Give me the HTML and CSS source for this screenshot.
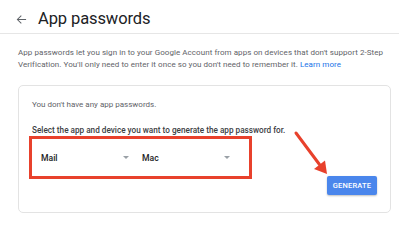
FILE: index.html
```html
<!DOCTYPE html>
<html>
<head>
<meta charset="utf-8">
<link rel="stylesheet" href="styles.css">
</head>
<body>
<header class="topbar">
  <svg class="back" width="11" height="11" viewBox="0 0 12 12"><path d="M11 6H1.5M5.8 1.7L1.5 6l4.3 4.3" fill="none" stroke="#5f6368" stroke-width="1.1"/></svg>
  <h1 class="title">App passwords</h1>
</header>
<main class="main">
  <p class="desc">App passwords let you sign in to your Google Account from apps on devices that don't support 2-Step Verification. You'll only need to enter it once so you don't need to remember it. <span class="link">Learn more</span></p>
  <section class="card">
    <p class="empty">You don't have any app passwords.</p>
    <p class="prompt">Select the app and device you want to generate the app password for.</p>
    <div class="selects">
      <div class="select"><span class="sel-label">Mail</span><span class="caret"></span></div>
      <div class="select"><span class="sel-label">Mac</span><span class="caret"></span></div>
    </div>
    <div class="actions"><button class="btn">GENERATE</button></div>
    <svg class="arrow" width="399" height="229" viewBox="0 0 399 229">
      <line x1="296" y1="133" x2="319.5" y2="164.5" stroke="#e8412c" stroke-width="3" stroke-linecap="round"/>
      <polygon points="327,174 314,169 325,160.5" fill="#e8412c"/>
    </svg>
  </section>
</main>
</body>
</html>
```
FILE: styles.css
```css
* { box-sizing: border-box; }
html, body { margin: 0; padding: 0; background: #fff; }
body { font-family: Roboto, "Liberation Sans", Arial, sans-serif; color: #5f6368; width: 399px; height: 229px; overflow: hidden; position: relative; }
.topbar { height: 34px; display: flex; align-items: center; padding-left: 16px; padding-top: 5px; gap: 11px; border-bottom: 1px solid #e6e6e6; }
.back { display: block; }
.title { margin: 0; font-size: 16.5px; font-weight: 400; color: #202124; letter-spacing: -0.1px; line-height: 24px; }
.main { padding: 13px 8px 0 18px; }
.desc { margin: 0; font-size: 8px; line-height: 12px; color: #5f6368; letter-spacing: 0.06px; }
.link { color: #1a73e8; }
.card { margin-top: 14px; height: 128px; border: 1px solid #e3e3e3; border-radius: 5px; padding: 13px 13px 0 13px; display: flex; flex-direction: column; }
.empty { margin: 0; font-size: 8px; line-height: 12px; color: #5f6368; }
.prompt { margin: 13px 0 0 0; font-size: 8.2px; line-height: 12px; color: #3c4043; font-weight: 500; }
.selects { margin-left: -3px; width: 223px; height: 43px; border: 3px solid #e8412c; display: flex; align-items: center; padding-left: 9px; gap: 11px; }
.select { width: 90px; display: flex; align-items: center; justify-content: space-between; }
.sel-label { font-size: 8.6px; font-weight: 500; color: #202124; }
.caret { width: 0; height: 0; border-left: 3.5px solid transparent; border-right: 3.5px solid transparent; border-top: 3.5px solid #9aa0a6; margin-right: 2px; }
.actions { display: flex; justify-content: flex-end; margin-top: -3px; }
.btn { width: 50px; height: 19px; border: none; border-radius: 2px; background: #4a86ec; color: #fff; font-family: Roboto, "Liberation Sans", Arial, sans-serif; font-size: 7.5px; font-weight: 500; letter-spacing: 0.2px; padding: 0; box-shadow: 0 1px 2px rgba(0,0,0,0.25); }
.arrow { position: absolute; left: 0; top: 0; pointer-events: none; }
```
